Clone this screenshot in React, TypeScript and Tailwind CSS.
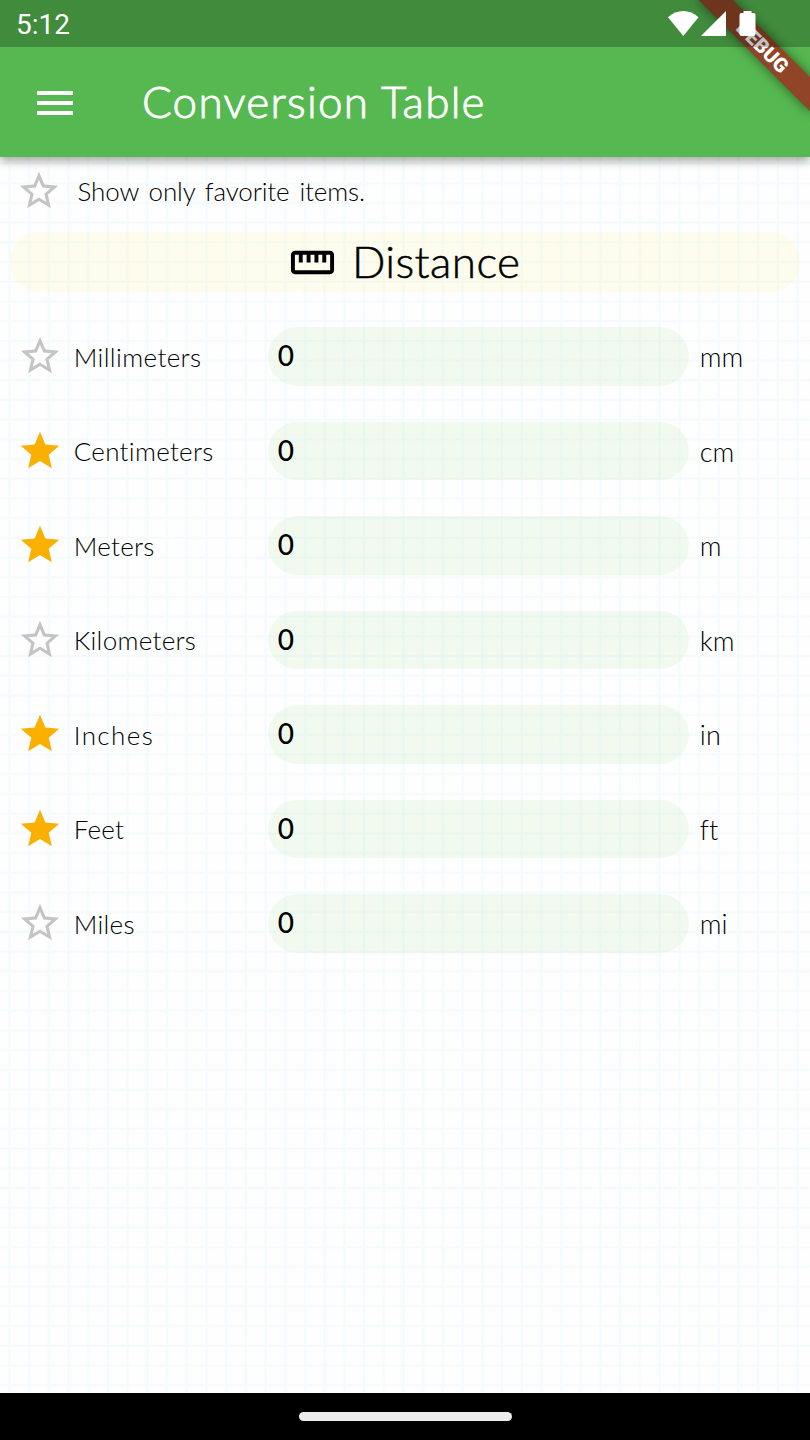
import { useState } from 'react';
import { MdMenu, MdStar, MdStarBorder, MdStraighten } from 'react-icons/md';

interface Unit {
  name: string;
  symbol: string;
  favorite: boolean;
  tracking: string;
}

const units: Unit[] = [
  { name: 'Millimeters', symbol: 'mm', favorite: false, tracking: 'tracking-[0.4px]' },
  { name: 'Centimeters', symbol: 'cm', favorite: true, tracking: 'tracking-[0.3px]' },
  { name: 'Meters', symbol: 'm', favorite: true, tracking: 'tracking-[0.3px]' },
  { name: 'Kilometers', symbol: 'km', favorite: false, tracking: 'tracking-[0.3px]' },
  { name: 'Inches', symbol: 'in', favorite: true, tracking: 'tracking-[1.4px]' },
  { name: 'Feet', symbol: 'ft', favorite: true, tracking: 'tracking-[0.2px]' },
  { name: 'Miles', symbol: 'mi', favorite: false, tracking: 'tracking-[0.3px]' },
];

function FavoriteStar({ on, onClick }: { on: boolean; onClick: () => void }) {
  return (
    <button onClick={onClick} className="size-[46px] shrink-0">
      {on ? <MdStar className="size-full text-[#f9b000]" /> : <MdStarBorder className="size-full text-[#c4c4c4]" />}
    </button>
  );
}

function StatusBar() {
  return (
    <div className="absolute inset-x-0 top-0 z-20 flex h-[47px] justify-between bg-black/24 pl-4 text-white">
      <span className="pt-[5px] font-[Roboto,sans-serif] text-[28px] leading-10 font-normal">5:12</span>
      <svg className="mt-[10px] mr-[54px] h-[27px] w-[88px]" viewBox="0 0 88 27" fill="currentColor">
        <path d="M0 7.3C9-1.2 21.500-1.200 30.500 7.300L15.300 26Z" />
        <path d="M58 1v25H33Z" />
        <path d="M75.500 1h8v2h2.100q1.900 0 1.900 1.900V24q0 2-2 2H73.500q-2 0-2-2V4.900q0-1.900 1.900-1.900h2.100Z" />
      </svg>
    </div>
  );
}

function DebugRibbon() {
  return (
    <div className="pointer-events-none absolute top-0 right-0 z-10 size-[157px] overflow-hidden">
      <div className="absolute top-[35px] left-[31.300px] flex h-[23.600px] w-[157.600px] rotate-45 items-center justify-center bg-[#904528] font-[Roboto,sans-serif] text-[20px] leading-none font-black text-white shadow-[0_0_12px_rgba(0,0,0,0.5)]">
        DEBUG
      </div>
    </div>
  );
}

export default function App() {
  const [rows, setRows] = useState(units);
  const [onlyFavorites, setOnlyFavorites] = useState(false);

  const toggle = (name: string) =>
    setRows(rows.map(r => (r.name === name ? { ...r, favorite: !r.favorite } : r)));

  return (
    <div className="relative flex h-[1440px] w-[810px] flex-col overflow-hidden bg-[#fefefe] font-[Lato,sans-serif] font-light text-black">
      <StatusBar />
      <DebugRibbon />

      <header className="relative flex h-[157px] shrink-0 items-center bg-[#56b850] pt-[47px] pl-[31px] text-white shadow-[0_4px_9px_rgba(0,0,0,0.35)]">
        <MdMenu className="mt-px size-12" />
        <h1 className="ml-[63px] pb-[2px] text-[44px] leading-[56px] tracking-[1.250px] [-webkit-text-stroke:0.9px_white]">
          Conversion Table
        </h1>
      </header>

      {/* Graph paper */}
      <main className="flex-1 bg-[linear-gradient(to_right,transparent,#f3fafd_1.5px,#f3fafd_2px,transparent_3.5px),linear-gradient(to_bottom,transparent,#f3fafd_1.5px,#f3fafd_2px,transparent_3.5px)] bg-size-[19.705px_19.705px] bg-position-[7.800px_4.800px]">
        <div className="flex h-[68px] items-center pl-[15.600px]">
          <FavoriteStar on={onlyFavorites} onClick={() => setOnlyFavorites(!onlyFavorites)} />
          <span className="ml-4 pt-px text-[26px] tracking-[-0.140px] [word-spacing:3px]">Show only favorite items.</span>
        </div>

        <div className="mx-[10px] mt-[7px] flex h-[60px] items-center rounded-full bg-[#fff056]/10 pl-[279px]">
          <MdStraighten className="size-[47px]" />
          <h2 className="ml-[16px] pb-[2px] text-[44px] leading-[58px] tracking-[0.4px] [-webkit-text-stroke:0.5px_black]">Distance</h2>
        </div>

        <div className="mt-[17px]">
          {rows.filter(r => !onlyFavorites || r.favorite).map(r => (
            <div key={r.name} className="flex h-[94.500px] items-center pl-[16.700px]">
              <FavoriteStar on={r.favorite} onClick={() => toggle(r.name)} />
              <span className={`ml-[11px] w-[194px] pt-[2px] text-[26px] ${r.tracking}`}>{r.name}</span>
              <div className="flex h-[58.500px] w-[421px] items-center rounded-full bg-[#64c84b]/8 pb-[2px] pl-[10px] text-[28px] font-medium">
                0
              </div>
              <span className="ml-[11px] pt-[2px] text-[27px] tracking-[0.2px]">{r.symbol}</span>
            </div>
          ))}
        </div>
      </main>

      <footer className="flex h-[47px] shrink-0 items-center justify-center bg-black">
        <div className="h-[8.500px] w-[213px] rounded-full bg-[#ececec]" />
      </footer>
    </div>
  );
}
